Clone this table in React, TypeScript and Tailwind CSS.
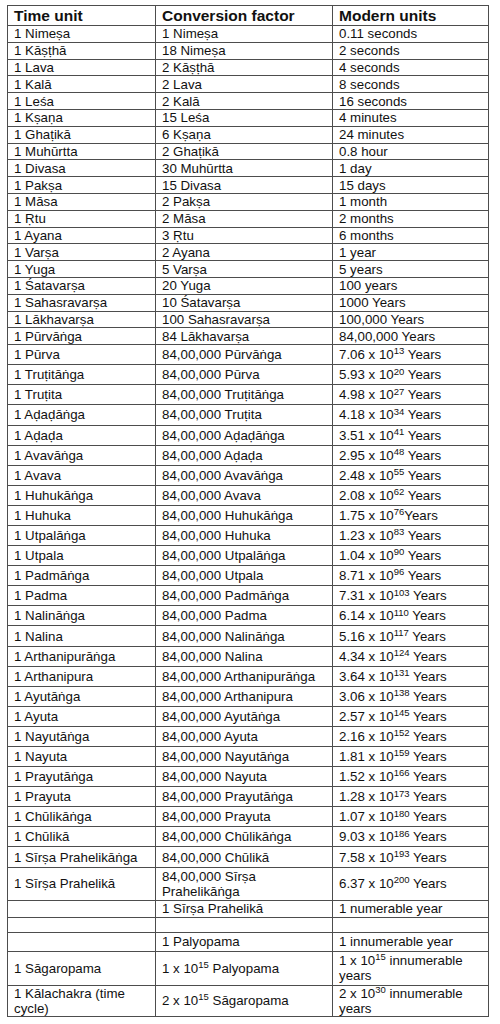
import React from "react";

type Cell = React.ReactNode;
type Row = { c: [Cell, Cell, Cell]; h: string };

const Sup = ({ children }: { children: React.ReactNode }) => (
  <sup className="text-[9.5px]">{children}</sup>
);

const exp = (m: string, e: string, suffix = " Years") => (
  <>
    {m} x 10<Sup>{e}</Sup>
    {suffix}
  </>
);

const short: [string, string, string][] = [
  ["1 Nimeṣa", "1 Nimeṣa", "0.11 seconds"],
  ["1 Kāṣṭhā", "18 Nimeṣa", "2 seconds"],
  ["1 Lava", "2 Kāṣṭhā", "4 seconds"],
  ["1 Kalā", "2 Lava", "8 seconds"],
  ["1 Leśa", "2 Kalā", "16 seconds"],
  ["1 Kṣaṇa", "15 Leśa", "4 minutes"],
  ["1 Ghaṭikā", "6 Kṣaṇa", "24 minutes"],
  ["1 Muhūrtta", "2 Ghaṭikā", "0.8 hour"],
  ["1 Divasa", "30 Muhūrtta", "1 day"],
  ["1 Pakṣa", "15 Divasa", "15 days"],
  ["1 Māsa", "2 Pakṣa", "1 month"],
  ["1 Ṛtu", "2 Māsa", "2 months"],
  ["1 Ayana", "3 Ṛtu", "6 months"],
  ["1 Varṣa", "2 Ayana", "1 year"],
  ["1 Yuga", "5 Varṣa", "5 years"],
  ["1 Śatavarṣa", "20 Yuga", "100 years"],
  ["1 Sahasravarṣa", "10 Śatavarṣa", "1000 Years"],
  ["1 Lākhavarṣa", "100 Sahasravarṣa", "100,000 Years"],
  ["1 Pūrvāṅga", "84 Lākhavarṣa", "84,00,000 Years"],
];

const tall: [string, string, string, string, string?][] = [
  ["1 Pūrva", "84,00,000 Pūrvāṅga", "7.06", "13"],
  ["1 Truṭitāṅga", "84,00,000 Pūrva", "5.93", "20"],
  ["1 Truṭita", "84,00,000 Truṭitāṅga", "4.98", "27"],
  ["1 Aḍaḍāṅga", "84,00,000 Truṭita", "4.18", "34"],
  ["1 Aḍaḍa", "84,00,000 Aḍaḍāṅga", "3.51", "41"],
  ["1 Avavāṅga", "84,00,000 Aḍaḍa", "2.95", "48"],
  ["1 Avava", "84,00,000 Avavāṅga", "2.48", "55"],
  ["1 Huhukāṅga", "84,00,000 Avava", "2.08", "62"],
  ["1 Huhuka", "84,00,000 Huhukāṅga", "1.75", "76", "Years"],
  ["1 Utpalāṅga", "84,00,000 Huhuka", "1.23", "83"],
  ["1 Utpala", "84,00,000 Utpalāṅga", "1.04", "90"],
  ["1 Padmāṅga", "84,00,000 Utpala", "8.71", "96"],
  ["1 Padma", "84,00,000 Padmāṅga", "7.31", "103"],
  ["1 Nalināṅga", "84,00,000 Padma", "6.14", "110"],
  ["1 Nalina", "84,00,000 Nalināṅga", "5.16", "117"],
  ["1 Arthanipurāṅga", "84,00,000 Nalina", "4.34", "124"],
  ["1 Arthanipura", "84,00,000 Arthanipurāṅga", "3.64", "131"],
  ["1 Ayutāṅga", "84,00,000 Arthanipura", "3.06", "138"],
  ["1 Ayuta", "84,00,000 Ayutāṅga", "2.57", "145"],
  ["1 Nayutāṅga", "84,00,000 Ayuta", "2.16", "152"],
  ["1 Nayuta", "84,00,000 Nayutāṅga", "1.81", "159"],
  ["1 Prayutāṅga", "84,00,000 Nayuta", "1.52", "166"],
  ["1 Prayuta", "84,00,000 Prayutāṅga", "1.28", "173"],
  ["1 Chūlikāṅga", "84,00,000 Prayuta", "1.07", "180"],
  ["1 Chūlikā", "84,00,000 Chūlikāṅga", "9.03", "186"],
  ["1 Sīrṣa Prahelikāṅga", "84,00,000 Chūlikā", "7.58", "193"],
];

const rows: Row[] = [
  ...short.map((r) => ({ c: r as [Cell, Cell, Cell], h: "h-[16.8px]" })),
  ...tall.map((r) => ({
    c: [r[0], r[1], exp(r[2], r[3], r[4] ?? " Years")] as [Cell, Cell, Cell],
    h: "h-[20.1px]",
  })),
  {
    c: [
      "1 Sīrṣa Prahelikā",
      <>
        84,00,000 Sīrṣa
        <br />
        Prahelikāṅga
      </>,
      exp("6.37", "200"),
    ],
    h: "h-[33px]",
  },
  { c: ["", "1 Sīrṣa Prahelikā", "1 numerable year"], h: "h-[17px]" },
  { c: ["", "", ""], h: "h-[15px]" },
  { c: ["", "1 Palyopama", "1 innumerable year"], h: "h-[19px]" },
  {
    c: [
      "1 Sāgaropama",
      <>
        1 x 10<Sup>15</Sup> Palyopama
      </>,
      <>
        1 x 10<Sup>15</Sup> innumerable
        <br />
        years
      </>,
    ],
    h: "h-[34px]",
  },
  {
    c: [
      <>
        1 Kālachakra (time
        <br />
        cycle)
      </>,
      <>
        2 x 10<Sup>15</Sup> Sāgaropama
      </>,
      <>
        2 x 10<Sup>30</Sup> innumerable
        <br />
        years
      </>,
    ],
    h: "h-[28px]",
  },
];

export default function App() {
  return (
    <div className="min-h-[1024px] w-[500px] bg-white pl-[7px] pt-[5px] font-['Liberation_Sans',Arial,sans-serif] text-[#111]">
      <table className="w-[481px] table-fixed border-collapse">
        <colgroup>
          <col className="w-[148px]" />
          <col className="w-[177px]" />
          <col className="w-[156px]" />
        </colgroup>
        <thead>
          <tr className="h-[20px]">
            {["Time unit", "Conversion factor", "Modern units"].map((t) => (
              <th
                key={t}
                className="border border-[#4d4d4d] px-[6px] py-0 text-left align-middle text-[15.5px] font-bold leading-[17px]"
              >
                {t}
              </th>
            ))}
          </tr>
        </thead>
        <tbody>
          {rows.map((r, i) => (
            <tr key={i} className={r.h}>
              {r.c.map((cell, j) => (
                <td
                  key={j}
                  className="border border-[#4d4d4d] px-[6px] py-0 align-middle text-[13.3px] leading-[15px] whitespace-nowrap"
                >
                  {cell}
                </td>
              ))}
            </tr>
          ))}
        </tbody>
      </table>
    </div>
  );
}
